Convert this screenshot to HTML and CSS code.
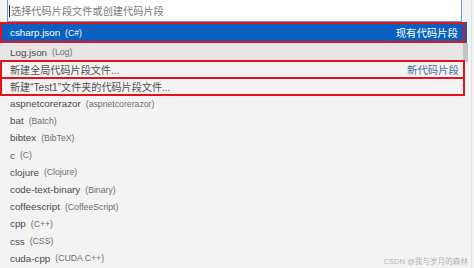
FILE: index.html
```html
<!DOCTYPE html>
<html lang="zh-CN">
<head>
<meta charset="utf-8">
<title>选择代码片段文件</title>
<link rel="stylesheet" href="styles.css">
</head>
<body>
<div class="widget">
  <div class="input">
    <span class="caret"></span>
    <span class="placeholder">选择代码片段文件或创建代码片段</span>
  </div>
  <div class="list">
    <div class="row r21 selected marked"><span class="label">csharp.json</span><span class="desc">(C#)</span><span class="sep">现有代码片段</span></div>
    <div class="row r18 hover"><span class="label">Log.json</span><span class="desc">(Log)</span></div>
    <div class="row r17 marked wide"><span class="label cjk">新建全局代码片段文件...</span><span class="sep muted">新代码片段</span></div>
    <div class="row r17 marked wide"><span class="label cjk">新建“Test1”文件夹的代码片段文件...</span></div>
    <div class="row"><span class="label">aspnetcorerazor</span><span class="desc">(aspnetcorerazor)</span></div>
    <div class="row"><span class="label">bat</span><span class="desc">(Batch)</span></div>
    <div class="row"><span class="label">bibtex</span><span class="desc">(BibTeX)</span></div>
    <div class="row"><span class="label">c</span><span class="desc">(C)</span></div>
    <div class="row"><span class="label">clojure</span><span class="desc">(Clojure)</span></div>
    <div class="row"><span class="label">code-text-binary</span><span class="desc">(Binary)</span></div>
    <div class="row"><span class="label">coffeescript</span><span class="desc">(CoffeeScript)</span></div>
    <div class="row"><span class="label">cpp</span><span class="desc">(C++)</span></div>
    <div class="row"><span class="label">css</span><span class="desc">(CSS)</span></div>
    <div class="row"><span class="label">cuda-cpp</span><span class="desc">(CUDA C++)</span></div>
    <div class="thumb"></div>
  </div>
  <div class="edge"></div>
  <div class="watermark">CSDN @我与岁月的森林</div>
</div>
</body>
</html>
```

FILE: styles.css
```css
html, body {
  margin: 0;
  padding: 0;
  background: #f3f3f3;
}
.widget {
  position: relative;
  width: 474px;
  height: 268px;
  overflow: hidden;
  background: #f3f3f3;
  font-family: "Liberation Sans", "Noto Sans CJK SC", sans-serif;
  color: #4a4a4a;
}
.input {
  box-sizing: border-box;
  margin: -1px 0 0 7px;
  width: 455px;
  height: 23px;
  background: #fff;
  border: 1px solid #5b9fe6;
  display: flex;
  align-items: center;
  padding-left: 1px;
}
.caret {
  width: 1px;
  height: 12px;
  background: #222;
  margin-right: 1px;
}
.placeholder {
  font-size: 10.2px;
  color: #7a7a7a;
}
.list {
  position: relative;
  width: 468px;
}
.row {
  position: relative;
  box-sizing: border-box;
  height: 17.2px;
  display: flex;
  align-items: center;
  padding: 0 9px 0 10px;
  white-space: nowrap;
}
.r21 { height: 21px; }
.r18 { height: 18px; }
.r17 { height: 17px; }
.label {
  font-size: 9.8px;
  color: #4a4a4a;
}
.label.cjk {
  font-size: 10.1px;
  color: #505050;
}
.desc {
  font-size: 8.7px;
  color: #6e6e6e;
  margin-left: 5px;
}
.sep {
  margin-left: auto;
  font-size: 10.4px;
  color: #fff;
}
.sep.muted {
  color: #4e6e9e;
}
.selected {
  background: #0a60c0;
  width: 467px;
}
.selected .label,
.selected .desc {
  color: #fff;
}
.hover {
  background: #e6e6e6;
  width: 467px;
}
.marked::after {
  content: "";
  position: absolute;
  left: 0;
  top: 0;
  bottom: 0;
  width: 465px;
  box-sizing: border-box;
  border: 2px solid #e5121c;
  z-index: 2;
}
.marked.wide::after {
  top: -1px;
  bottom: -1px;
}
.thumb {
  position: absolute;
  left: 463px;
  top: 21px;
  width: 5px;
  height: 19px;
  background: #c4c4c4;
  z-index: 1;
}
.edge {
  position: absolute;
  left: 471px;
  top: 0;
  bottom: 0;
  width: 1px;
  background: #e4e4e4;
}
.watermark {
  position: absolute;
  right: 6px;
  bottom: 2px;
  font-size: 7.6px;
  color: #b4b4b4;
}
```
